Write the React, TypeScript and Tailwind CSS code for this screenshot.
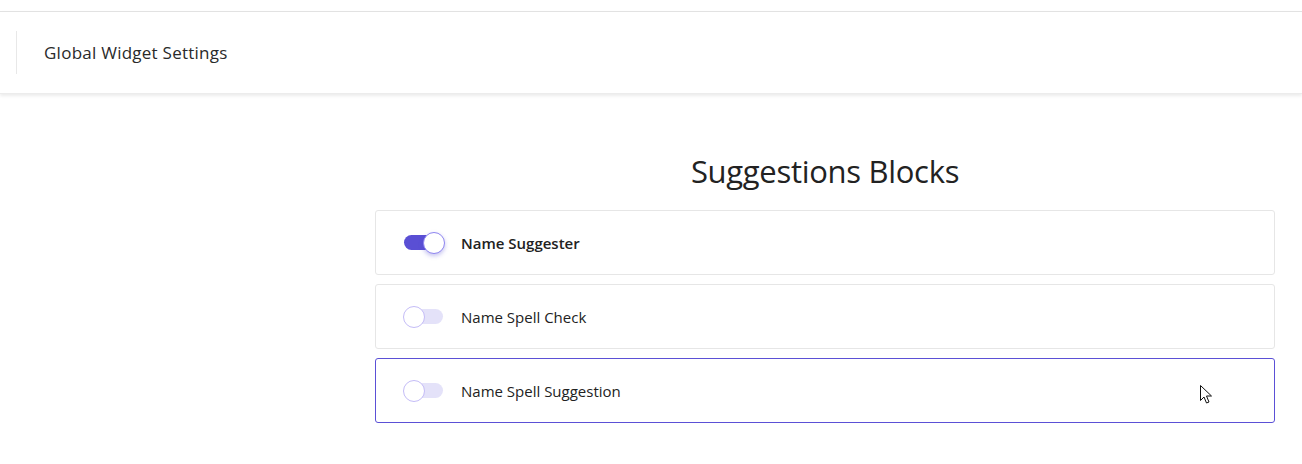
import React from "react";

function Toggle({ on }: { on: boolean }) {
  return (
    <div className="relative w-[42px] h-[22px] flex items-center shrink-0">
      <div
        className={
          on
            ? "ml-[1px] w-[36px] h-[15px] rounded-full bg-[#5a4fd4]"
            : "ml-[4px] w-[36px] h-[15px] rounded-full bg-[#e4e2f9]"
        }
      />
      <div
        className={
          on
            ? "absolute left-[20px] top-0 w-[22px] h-[22px] rounded-full bg-white border border-[#8f86f0] shadow-[0_2px_4px_rgba(90,79,212,0.35)]"
            : "absolute left-0 top-0 w-[22px] h-[22px] rounded-full bg-white border border-[#c4bcf7]"
        }
      />
    </div>
  );
}

function Card({
  label,
  on,
  active,
  children,
}: {
  label: string;
  on: boolean;
  active?: boolean;
  children?: React.ReactNode;
}) {
  return (
    <div
      className={
        "relative h-[65px] rounded-[3px] border flex items-center pl-[27px] gap-[16px] " +
        (active ? "border-[#5b50d6]" : "border-[#e6e6e6]")
      }
    >
      <Toggle on={on} />
      <span
        className={
          "text-[15px] text-[#222] pt-[1px] " + (on ? "font-semibold" : "font-normal")
        }
      >
        {label}
      </span>
      {children}
    </div>
  );
}

export default function App() {
  return (
    <div
      className="w-[1302px] h-[464px] bg-white overflow-hidden"
      style={{ fontFamily: '"Open Sans", "Noto Sans", sans-serif' }}
    >
      <div className="h-[11px]" />
      <div className="h-[83px] border-t border-[#e2e2e2] shadow-[0_2px_3px_rgba(0,0,0,0.08)] border-b border-b-[#ececec] flex items-center pl-[16px]">
        <div className="h-[43px] border-l border-[#e8e8e8] flex items-center pl-[27px]">
          <span className="text-[17px] text-[#2a2a2a] tracking-[0.25px]">Global Widget Settings</span>
        </div>
      </div>
      <div className="pl-[375px] pr-[27px] pt-[53px]">
        <h1 className="text-center text-[31px] leading-[48px] text-[#222] font-normal mb-[15px] tracking-[-0.3px]">
          Suggestions Blocks
        </h1>
        <div className="flex flex-col gap-[9px]">
          <Card label="Name Suggester" on />
          <Card label="Name Spell Check" on={false} />
          <Card label="Name Spell Suggestion" on={false} active>
            <svg
              className="absolute left-[824px] top-[26px]"
              width="13"
              height="20"
              viewBox="0 0 13 20"
            >
              <path
                d="M0.5 0.5 L0.5 15.5 L4 12 L6.5 18 L9 17 L6.5 11 L11.5 11 Z"
                fill="white"
                stroke="#111"
                strokeWidth="1"
                strokeLinejoin="miter"
              />
            </svg>
          </Card>
        </div>
      </div>
    </div>
  );
}
